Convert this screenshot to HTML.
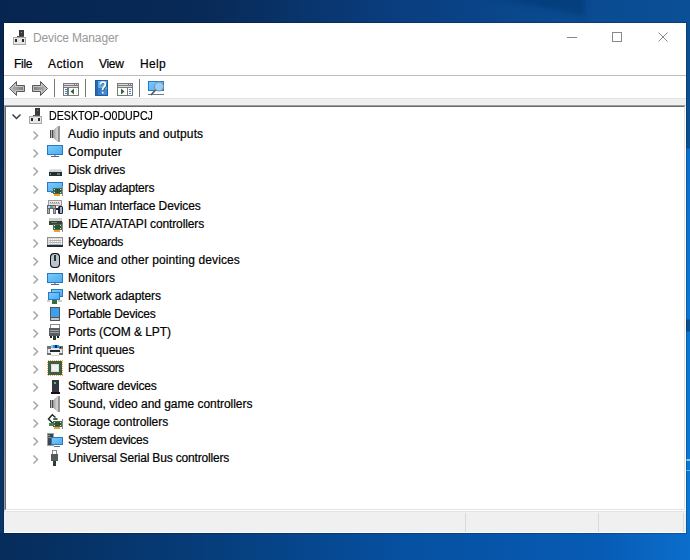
<!DOCTYPE html>
<html><head><meta charset="utf-8">
<style>
html,body{margin:0;padding:0}
body{width:690px;height:560px;overflow:hidden;position:relative;font-family:"Liberation Sans",sans-serif;font-size:12px;color:#000;
background:#07305c;}
.a{position:absolute}
#bgtop{left:0;top:0;width:690px;height:23px;background:linear-gradient(90deg,#062550 0%,#082a58 30%,#0a3e80 58%,#0a4a90 81%,#0b4f96 100%)}
#bgbot{left:0;top:533px;width:690px;height:27px;background:linear-gradient(90deg,#062c5a 0%,#063d7a 30%,#0650a0 58%,#075bb4 87%,#0b6ecc 100%)}
#bgright{left:686px;top:23px;width:4px;height:510px;background:linear-gradient(180deg,#0b4f93 0px,#0b4f93 125px,#0a70d0 126px,#0a76d6 296px,#0a4f90 297px,#0a4f90 308px,#0a76d6 309px,#0a78d8 480px,#0a70d0 510px)}
#bgleft{left:0;top:23px;width:4px;height:510px;background:linear-gradient(180deg,#052550 0%,#07305c 50%,#08366a 100%)}
#win{left:3px;top:22px;width:684px;height:512px;box-sizing:border-box;border:1px solid rgba(0,0,0,.2);background:#fff;background-clip:padding-box}
.t{position:absolute;white-space:nowrap;line-height:14px;-webkit-text-stroke:0.2px #000}
</style></head><body>
<div class="a" id="bgtop"></div>
<svg class="a" style="left:0;top:0" width="690" height="23">
<defs><filter id="bl" x="-20%" y="-100%" width="140%" height="300%"><feGaussianBlur stdDeviation="3"/></filter></defs>
<polygon points="485,-4 585,-4 585,16" fill="#03346e" opacity="0.55" filter="url(#bl)"/>
</svg>
<div class="a" id="bgbot"></div>
<div class="a" id="bgright"></div>
<div class="a" id="bgleft"></div>
<div class="a" style="left:686px;top:459px;width:4px;height:2px;background:#8ec6ea"></div>
<div class="a" style="left:686px;top:470px;width:4px;height:1px;background:#6fb4ea"></div>
<div class="a" id="win"></div>

<!-- title -->
<div class="t" style="left:33px;top:31px;color:#999;-webkit-text-stroke:0;font-size:12px;letter-spacing:-0.15px">Device Manager</div>
<!-- caption buttons -->
<div class="a" style="left:567px;top:37px;width:10px;height:1px;background:#888"></div>
<div class="a" style="left:612px;top:32px;width:10px;height:10px;box-sizing:border-box;border:1px solid #888"></div>
<svg class="a" style="left:658px;top:32px" width="10" height="10"><path d="M0.5 0.5L9.5 9.5M9.5 0.5L0.5 9.5" stroke="#888" stroke-width="1"/></svg>

<!-- menu -->
<div class="t" style="left:14px;top:57px;letter-spacing:-0.3px">File</div>
<div class="t" style="left:48px;top:57px;letter-spacing:0.4px">Action</div>
<div class="t" style="left:99px;top:57px;letter-spacing:-0.33px">View</div>
<div class="t" style="left:140px;top:57px;letter-spacing:0.33px">Help</div>
<div class="a" style="left:4px;top:75px;width:682px;height:1px;background:#bdbdbd"></div>

<!-- toolbar strip -->
<div class="a" style="left:4px;top:98px;width:682px;height:1px;background:#e3e3e3"></div>
<div class="a" style="left:4px;top:99px;width:682px;height:6px;background:#f0f0f0"></div>

<!-- tree view -->
<div class="a" style="left:4px;top:105px;width:682px;height:406px;box-sizing:border-box;border-style:solid;border-width:2px;border-color:#a0a0a0 #fff #fff #a0a0a0;background:#fff"></div>
<div class="a" style="left:5px;top:106px;width:680px;height:404px;box-sizing:border-box;border-style:solid;border-width:1px;border-color:#696969 #e3e3e3 #e3e3e3 #696969"></div>

<!-- status bar -->
<div class="a" style="left:4px;top:511px;width:682px;height:1px;background:#e3e3e3"></div>
<div class="a" style="left:4px;top:512px;width:682px;height:20px;background:#f0f0f0"></div>
<div class="a" style="left:465px;top:513px;width:1px;height:19px;background:#dadada"></div>
<div class="a" style="left:598px;top:513px;width:1px;height:19px;background:#dadada"></div>
<div class="a" style="left:683px;top:513px;width:1px;height:19px;background:#dadada"></div>

<svg class="a" style="left:0;top:0" width="690" height="560" viewBox="0 0 690 560" shape-rendering="crispEdges">
<defs>
<linearGradient id="scr" x1="0" y1="0" x2="1" y2="1"><stop offset="0" stop-color="#7cc8fb"/><stop offset="1" stop-color="#48aef2"/></linearGradient>
<linearGradient id="cone" x1="0" y1="0" x2="1" y2="0"><stop offset="0" stop-color="#9a9a9a"/><stop offset="0.6" stop-color="#d6d6d6"/><stop offset="1" stop-color="#8a8a8a"/></linearGradient>
<linearGradient id="arr" x1="0" y1="0" x2="1" y2="0"><stop offset="0" stop-color="#b8b8b8"/><stop offset="1" stop-color="#7a7a7a"/></linearGradient>
<linearGradient id="arr2" x1="0" y1="0" x2="1" y2="0"><stop offset="0" stop-color="#7a7a7a"/><stop offset="1" stop-color="#b8b8b8"/></linearGradient>
</defs>
<!-- title icon -->
<rect x="19" y="30" width="5" height="7" fill="#353b3b"/>
<rect x="21" y="32" width="1" height="1" fill="#5fb35f"/>
<rect x="17" y="36" width="7" height="1" fill="#555"/>
<rect x="13" y="37" width="13" height="8" fill="#a8a8a8"/>
<rect x="14" y="38" width="11" height="6" fill="#e6e6e6"/>
<rect x="15" y="39" width="2" height="3" fill="#2a2a2a"/>
<rect x="22" y="39" width="2" height="3" fill="#2a2a2a"/>

<!-- toolbar: back arrow -->
<path d="M9.5 88.5 L16.5 81.5 L16.5 85.5 L24.5 85.5 L24.5 91.5 L16.5 91.5 L16.5 95.5 Z" fill="url(#arr)" stroke="#5a5a5a" stroke-width="1" shape-rendering="geometricPrecision"/>
<path d="M47.5 88.5 L40.5 81.5 L40.5 85.5 L32.5 85.5 L32.5 91.5 L40.5 91.5 L40.5 95.5 Z" fill="url(#arr2)" stroke="#5a5a5a" stroke-width="1" shape-rendering="geometricPrecision"/>
<path d="M10.9 88.5 L15.5 83.9 L15.5 86.5 L23.5 86.5 L23.5 90.5 L15.5 90.5 L15.5 93.1 Z" fill="none" stroke="#e2e2e2" stroke-width="0.8" opacity="0.8" shape-rendering="geometricPrecision"/>
<path d="M46.1 88.5 L41.5 83.9 L41.5 86.5 L33.5 86.5 L33.5 90.5 L41.5 90.5 L41.5 93.1 Z" fill="none" stroke="#e2e2e2" stroke-width="0.8" opacity="0.8" shape-rendering="geometricPrecision"/>
<rect x="54" y="79" width="1" height="18" fill="#6f7d72"/>
<!-- console tree icon -->
<rect x="63" y="83" width="16" height="13" fill="#7b7b7b"/>
<rect x="64" y="84" width="10" height="1" fill="#dcdcdc"/><rect x="75" y="84" width="1" height="1" fill="#e8e8e8"/><rect x="77" y="84" width="1" height="1" fill="#e8e8e8"/>
<rect x="64" y="86" width="14" height="1" fill="#dcdcdc"/>
<rect x="64" y="88" width="3" height="7" fill="#fff"/>
<rect x="69" y="88" width="9" height="7" fill="#fff"/>
<rect x="65" y="89" width="2" height="1" fill="#3f7fd0"/><rect x="65" y="91" width="2" height="1" fill="#3f7fd0"/><rect x="65" y="93" width="2" height="1" fill="#3f7fd0"/>
<path d="M70.5 91.5 L74 88.5 L74 94.5 Z" fill="#2f6a34" shape-rendering="geometricPrecision"/>
<rect x="76" y="89" width="1" height="5" fill="#eeeeee"/>
<rect x="85" y="79" width="1" height="18" fill="#6f7d72"/>
<!-- help icon -->
<rect x="95" y="80" width="13" height="16" fill="#1e5c9e"/>
<rect x="96" y="81" width="11" height="14" fill="#55aef0"/>
<rect x="96" y="81" width="2" height="14" fill="#2a68aa"/>
<rect x="98" y="88" width="4" height="7" fill="#3a7cc4"/>
<rect x="102" y="89" width="5" height="6" fill="#3f8ad6"/>
<path d="M100.4 84.6 Q100.7 82.2 103 82.2 Q105.4 82.2 105.4 84.4 Q105.4 86 103.7 87.2 Q102.6 88 102.6 90.2" fill="none" stroke="#3a4a5a" stroke-width="1.7" shape-rendering="geometricPrecision" transform="translate(0.7,0.5)"/>
<path d="M100.4 84.6 Q100.7 82.2 103 82.2 Q105.4 82.2 105.4 84.4 Q105.4 86 103.7 87.2 Q102.6 88 102.6 90.2" fill="none" stroke="#fff" stroke-width="1.7" shape-rendering="geometricPrecision"/>
<rect x="101.8" y="91.8" width="1.7" height="1.7" fill="#fff" shape-rendering="geometricPrecision"/>
<!-- action pane icon -->
<rect x="117" y="83" width="16" height="13" fill="#7b7b7b"/>
<rect x="118" y="84" width="10" height="1" fill="#dcdcdc"/><rect x="129" y="84" width="1" height="1" fill="#e8e8e8"/><rect x="131" y="84" width="1" height="1" fill="#e8e8e8"/>
<rect x="118" y="86" width="14" height="1" fill="#dcdcdc"/>
<rect x="118" y="88" width="9" height="7" fill="#fff"/>
<rect x="128" y="88" width="4" height="7" fill="#fff"/>
<rect x="129" y="89" width="2" height="1" fill="#3f7fd0"/><rect x="129" y="91" width="2" height="1" fill="#3f7fd0"/><rect x="129" y="93" width="2" height="1" fill="#3f7fd0"/>
<path d="M121 88.5 L124.5 91.5 L121 94.5 Z" fill="#2f6a34" shape-rendering="geometricPrecision"/>
<rect x="139" y="79" width="1" height="18" fill="#6f7d72"/>
<!-- scan icon -->
<rect x="148" y="81" width="16" height="10" fill="#2b7cc4"/>
<rect x="149" y="82" width="14" height="8" fill="url(#scr)"/>
<rect x="148" y="94" width="16" height="1" fill="#6a7a90"/>
<circle cx="159" cy="86.5" r="4.5" fill="#8fd0ff" stroke="#8a8a8a" stroke-width="1" shape-rendering="geometricPrecision"/>
<path d="M155.5 90 L151 95" stroke="#555" stroke-width="1.6" shape-rendering="geometricPrecision"/>

<!-- tree chevrons -->
<path d="M12.5 114.5 L16.5 118.5 L20.5 114.5" fill="none" stroke="#3c3c3c" stroke-width="1.5" shape-rendering="geometricPrecision"/>
<path d="M33.5 131.5 L37.5 135.5 L33.5 139.5" fill="none" stroke="#a6a6a6" stroke-width="1.5" shape-rendering="geometricPrecision"/>
<path d="M33.5 149.5 L37.5 153.5 L33.5 157.5" fill="none" stroke="#a6a6a6" stroke-width="1.5" shape-rendering="geometricPrecision"/>
<path d="M33.5 167.5 L37.5 171.5 L33.5 175.5" fill="none" stroke="#a6a6a6" stroke-width="1.5" shape-rendering="geometricPrecision"/>
<path d="M33.5 185.5 L37.5 189.5 L33.5 193.5" fill="none" stroke="#a6a6a6" stroke-width="1.5" shape-rendering="geometricPrecision"/>
<path d="M33.5 203.5 L37.5 207.5 L33.5 211.5" fill="none" stroke="#a6a6a6" stroke-width="1.5" shape-rendering="geometricPrecision"/>
<path d="M33.5 221.5 L37.5 225.5 L33.5 229.5" fill="none" stroke="#a6a6a6" stroke-width="1.5" shape-rendering="geometricPrecision"/>
<path d="M33.5 239.5 L37.5 243.5 L33.5 247.5" fill="none" stroke="#a6a6a6" stroke-width="1.5" shape-rendering="geometricPrecision"/>
<path d="M33.5 257.5 L37.5 261.5 L33.5 265.5" fill="none" stroke="#a6a6a6" stroke-width="1.5" shape-rendering="geometricPrecision"/>
<path d="M33.5 275.5 L37.5 279.5 L33.5 283.5" fill="none" stroke="#a6a6a6" stroke-width="1.5" shape-rendering="geometricPrecision"/>
<path d="M33.5 293.5 L37.5 297.5 L33.5 301.5" fill="none" stroke="#a6a6a6" stroke-width="1.5" shape-rendering="geometricPrecision"/>
<path d="M33.5 311.5 L37.5 315.5 L33.5 319.5" fill="none" stroke="#a6a6a6" stroke-width="1.5" shape-rendering="geometricPrecision"/>
<path d="M33.5 329.5 L37.5 333.5 L33.5 337.5" fill="none" stroke="#a6a6a6" stroke-width="1.5" shape-rendering="geometricPrecision"/>
<path d="M33.5 347.5 L37.5 351.5 L33.5 355.5" fill="none" stroke="#a6a6a6" stroke-width="1.5" shape-rendering="geometricPrecision"/>
<path d="M33.5 365.5 L37.5 369.5 L33.5 373.5" fill="none" stroke="#a6a6a6" stroke-width="1.5" shape-rendering="geometricPrecision"/>
<path d="M33.5 383.5 L37.5 387.5 L33.5 391.5" fill="none" stroke="#a6a6a6" stroke-width="1.5" shape-rendering="geometricPrecision"/>
<path d="M33.5 401.5 L37.5 405.5 L33.5 409.5" fill="none" stroke="#a6a6a6" stroke-width="1.5" shape-rendering="geometricPrecision"/>
<path d="M33.5 419.5 L37.5 423.5 L33.5 427.5" fill="none" stroke="#a6a6a6" stroke-width="1.5" shape-rendering="geometricPrecision"/>
<path d="M33.5 437.5 L37.5 441.5 L33.5 445.5" fill="none" stroke="#a6a6a6" stroke-width="1.5" shape-rendering="geometricPrecision"/>
<path d="M33.5 455.5 L37.5 459.5 L33.5 463.5" fill="none" stroke="#a6a6a6" stroke-width="1.5" shape-rendering="geometricPrecision"/>
<rect x="35" y="108" width="5" height="8" fill="#353b3b"/><rect x="37" y="110" width="1" height="1" fill="#5fb35f"/><rect x="33" y="115" width="7" height="1" fill="#555"/><rect x="29" y="116" width="13" height="8" fill="#a8a8a8"/><rect x="30" y="117" width="11" height="6" fill="#e6e6e6"/><rect x="31" y="118" width="2" height="3" fill="#2a2a2a"/><rect x="38" y="118" width="2" height="3" fill="#2a2a2a"/>
<rect x="50" y="130" width="3" height="8" fill="#4a4a4a"/><rect x="51" y="130" width="1" height="8" fill="#b4b4b4"/><path d="M53 130 L58 126 L60 126 L60 142 L58 142 L53 138 Z" fill="url(#cone)"/><rect x="58" y="127" width="1" height="15" fill="#8a948a"/>
<rect x="50" y="400" width="3" height="8" fill="#4a4a4a"/><rect x="51" y="400" width="1" height="8" fill="#b4b4b4"/><path d="M53 400 L58 396 L60 396 L60 412 L58 412 L53 408 Z" fill="url(#cone)"/><rect x="58" y="397" width="1" height="15" fill="#8a948a"/>
<rect x="47" y="145" width="16" height="10" fill="#2a78c0"/><rect x="48" y="146" width="14" height="8" fill="url(#scr)"/><rect x="54" y="155" width="2" height="1" fill="#9aa6b4"/><rect x="51" y="156" width="8" height="1" fill="#5d6b80"/>
<rect x="50" y="169" width="11" height="1" fill="#e4e4e4"/><rect x="49" y="170" width="13" height="2" fill="#d4d4d4"/><rect x="49" y="172" width="13" height="4" fill="#232d36"/><rect x="50" y="173" width="1" height="2" fill="#5d9a5d"/><rect x="57" y="173" width="3" height="2" fill="#4f7f5f"/>
<rect x="47" y="182" width="16" height="10" fill="#2a78c0"/><rect x="48" y="183" width="14" height="8" fill="url(#scr)"/><rect x="51" y="192" width="3" height="1" fill="#5d6b80"/><rect x="53" y="188" width="10" height="6" fill="#3f6e47"/><rect x="55" y="189" width="6" height="4" fill="#2f4f36"/><rect x="54" y="189" width="1" height="1" fill="#cfe3cf"/><rect x="60" y="189" width="1" height="1" fill="#cfe3cf"/><rect x="54" y="192" width="1" height="1" fill="#cfe3cf"/><rect x="60" y="192" width="1" height="1" fill="#cfe3cf"/><rect x="54" y="194" width="6" height="2" fill="#f0a030"/><rect x="62" y="186" width="1" height="10" fill="#8a8a8a"/>
<rect x="48" y="200" width="14" height="6" fill="#9a9a9a"/><rect x="49" y="201" width="12" height="4" fill="#e8e8e8"/><rect x="50" y="202" width="1" height="1" fill="#8a8a8a"/><rect x="52" y="202" width="1" height="1" fill="#8a8a8a"/><rect x="54" y="202" width="1" height="1" fill="#8a8a8a"/><rect x="56" y="202" width="1" height="1" fill="#8a8a8a"/><rect x="58" y="202" width="1" height="1" fill="#8a8a8a"/><rect x="50" y="203" width="10" height="1" fill="#b8b8b8"/><rect x="47" y="205" width="9" height="4" fill="#5e6166"/><rect x="50" y="206" width="3" height="2" fill="#2f9ef0"/><rect x="53" y="206" width="2" height="2" fill="#f5a732"/><rect x="48" y="206" width="2" height="2" fill="#c8c8c8"/><rect x="47" y="209" width="3" height="5" fill="#6a6d70"/><rect x="53" y="209" width="3" height="5" fill="#6a6d70"/><rect x="48" y="209" width="1" height="4" fill="#b0b0b0"/><rect x="54" y="209" width="1" height="4" fill="#b0b0b0"/><rect x="56" y="208" width="2" height="2" fill="#2a2a2a"/><rect x="58" y="206" width="5" height="8" rx="1.5" fill="#14203c" shape-rendering="geometricPrecision"/><rect x="59.5" y="207" width="2" height="6" fill="#a8b4c4"/>
<rect x="49" y="218" width="13" height="3" fill="#cfcfcf"/><rect x="49" y="221" width="13" height="4" fill="#344238"/><rect x="51" y="222" width="6" height="1" fill="#5d8a5d"/><rect x="53" y="224" width="10" height="6" fill="#3f6e47"/><rect x="55" y="225" width="6" height="4" fill="#2f4f36"/><rect x="54" y="225" width="1" height="1" fill="#cfe3cf"/><rect x="60" y="225" width="1" height="1" fill="#cfe3cf"/><rect x="54" y="228" width="1" height="1" fill="#cfe3cf"/><rect x="60" y="228" width="1" height="1" fill="#cfe3cf"/><rect x="54" y="230" width="6" height="2" fill="#f0a030"/><rect x="62" y="222" width="1" height="10" fill="#8a8a8a"/>
<rect x="47" y="237" width="16" height="10" fill="#8f8f8f"/><rect x="48" y="238" width="14" height="7" fill="#dcdcdc"/><rect x="49" y="239" width="1" height="1" fill="#f8f8f8"/><rect x="51" y="239" width="1" height="1" fill="#f8f8f8"/><rect x="53" y="239" width="1" height="1" fill="#f8f8f8"/><rect x="55" y="239" width="1" height="1" fill="#f8f8f8"/><rect x="57" y="239" width="1" height="1" fill="#f8f8f8"/><rect x="59" y="239" width="1" height="1" fill="#f8f8f8"/><rect x="61" y="239" width="1" height="1" fill="#f8f8f8"/><rect x="49" y="240" width="12" height="1" fill="#b0b0b0"/><rect x="49" y="241" width="1" height="1" fill="#f8f8f8"/><rect x="51" y="241" width="1" height="1" fill="#f8f8f8"/><rect x="53" y="241" width="1" height="1" fill="#f8f8f8"/><rect x="55" y="241" width="1" height="1" fill="#f8f8f8"/><rect x="57" y="241" width="1" height="1" fill="#f8f8f8"/><rect x="59" y="241" width="1" height="1" fill="#f8f8f8"/><rect x="61" y="241" width="1" height="1" fill="#f8f8f8"/><rect x="49" y="242" width="12" height="1" fill="#b0b0b0"/><rect x="49" y="243" width="1" height="1" fill="#f8f8f8"/><rect x="51" y="243" width="1" height="1" fill="#f8f8f8"/><rect x="53" y="243" width="1" height="1" fill="#f8f8f8"/><rect x="55" y="243" width="1" height="1" fill="#f8f8f8"/><rect x="57" y="243" width="1" height="1" fill="#f8f8f8"/><rect x="59" y="243" width="1" height="1" fill="#f8f8f8"/><rect x="61" y="243" width="1" height="1" fill="#f8f8f8"/><rect x="49" y="244" width="12" height="1" fill="#b0b0b0"/><rect x="47" y="245" width="16" height="2" fill="#1e2d3a"/>
<rect x="50" y="253" width="10" height="15" rx="4" fill="#111" shape-rendering="geometricPrecision"/><rect x="51" y="254" width="8" height="13" rx="3.5" fill="#b8c4d2" shape-rendering="geometricPrecision"/><rect x="54" y="255" width="2" height="6" fill="#2c3c2c"/>
<rect x="47" y="273" width="16" height="10" fill="#2a78c0"/><rect x="48" y="274" width="14" height="8" fill="url(#scr)"/><rect x="54" y="283" width="2" height="1" fill="#9aa6b4"/><rect x="51" y="284" width="8" height="1" fill="#5d6b80"/>
<rect x="51" y="289" width="12" height="8" fill="#2a78c0"/><rect x="52" y="290" width="10" height="6" fill="url(#scr)"/><rect x="48" y="292" width="12" height="8" fill="#2a78c0"/><rect x="49" y="293" width="10" height="6" fill="url(#scr)"/><rect x="47" y="300" width="3" height="2" fill="#cfcfcf"/><rect x="58" y="300" width="4" height="2" fill="#cfcfcf"/><rect x="52" y="300" width="5" height="4" fill="#3c6a44"/>
<rect x="50" y="307" width="10" height="14" fill="#555"/><rect x="51" y="308" width="8" height="9" fill="#3aa0f0"/><rect x="51" y="318" width="8" height="2" fill="#c8c8c8"/>
<rect x="50" y="324" width="10" height="4" fill="#8a8a8a"/><rect x="51" y="325" width="8" height="3" fill="#fff"/><rect x="49" y="328" width="11" height="8" fill="#5a5d60"/><rect x="50" y="330" width="9" height="1" fill="#a0a4a8"/><rect x="50" y="332" width="9" height="1" fill="#a0a4a8"/><rect x="50" y="336" width="2" height="2" fill="#222"/><rect x="57" y="336" width="2" height="2" fill="#222"/><rect x="53" y="336" width="3" height="4" fill="#2c4030"/>
<rect x="47" y="346" width="16" height="9" fill="#9a9a9a"/><rect x="48" y="347" width="14" height="7" fill="#e6e6e6"/><rect x="47" y="346" width="4" height="3" fill="#6e726e"/><rect x="59" y="346" width="4" height="3" fill="#6e726e"/><rect x="60" y="347" width="1" height="1" fill="#000"/><rect x="47" y="353" width="4" height="2" fill="#6e726e"/><rect x="59" y="353" width="4" height="2" fill="#6e726e"/><rect x="51" y="345" width="8" height="3" fill="#2a8ee6"/><rect x="51" y="345" width="2" height="3" fill="#7cc8f8"/><rect x="55" y="345" width="2" height="3" fill="#06264a"/><rect x="50" y="350" width="10" height="2" fill="#1e2a34"/><rect x="51" y="352" width="8" height="4" fill="#fbfbfb"/><rect x="51" y="355" width="8" height="1" fill="#d0d4d4"/>
<rect x="47.5" y="360.5" width="15" height="15" fill="none" stroke="#f5b040" stroke-width="1" stroke-dasharray="1 1"/><rect x="48" y="361" width="14" height="14" fill="#3f5e45"/><rect x="51" y="364" width="8" height="8" fill="#dcdcdc"/><rect x="52" y="365" width="6" height="6" fill="#f2f2f2"/>
<rect x="52" y="380" width="7" height="12" fill="#2f3a42"/><rect x="54" y="382" width="2" height="2" fill="#6fb06f"/><rect x="51" y="392" width="9" height="2" fill="#2a0a10"/>
<path d="M55.5 417.5 L52.3 414.8 L48.5 419 L52.5 423 L54 424.5 M53.2 419 L57.5 419" fill="none" stroke="#1f2f24" stroke-width="1.5" shape-rendering="geometricPrecision"/><rect x="49" y="423" width="4" height="3" fill="#4f7f55"/><rect x="53" y="421" width="10" height="6" fill="#3f6e47"/><rect x="55" y="422" width="6" height="4" fill="#2f4f36"/><rect x="54" y="422" width="1" height="1" fill="#cfe3cf"/><rect x="60" y="422" width="1" height="1" fill="#cfe3cf"/><rect x="54" y="425" width="1" height="1" fill="#cfe3cf"/><rect x="60" y="425" width="1" height="1" fill="#cfe3cf"/><rect x="54" y="427" width="6" height="2" fill="#f0a030"/><rect x="62" y="419" width="1" height="10" fill="#8a8a8a"/>
<rect x="47" y="433" width="7" height="13" fill="#9aa0a6"/><rect x="48" y="434" width="5" height="11" fill="#3e454c"/><rect x="48" y="437" width="5" height="1" fill="#8a9096"/><rect x="48" y="435" width="2" height="1" fill="#6fb06f"/><rect x="51" y="437" width="12" height="8" fill="#2a78c0"/><rect x="52" y="438" width="10" height="6" fill="url(#scr)"/><rect x="54" y="446" width="6" height="1" fill="#5d6b80"/>
<rect x="52" y="450" width="5" height="4" fill="#8a8a8a"/><rect x="53" y="451" width="3" height="3" fill="#fff"/><rect x="51" y="454" width="7" height="7" fill="#555a5e"/><rect x="53" y="461" width="3" height="5" fill="#2c3a30"/>
</svg>
<div id="tree">
<div class="t" style="left:49px;top:109px;transform:scaleX(0.887);transform-origin:0 0">DESKTOP-O0DUPCJ</div>
<div class="t" style="left:68px;top:127px;letter-spacing:0.13px">Audio inputs and outputs</div>
<div class="t" style="left:68px;top:145px;letter-spacing:0.143px">Computer</div>
<div class="t" style="left:68px;top:163px;letter-spacing:-0.15px">Disk drives</div>
<div class="t" style="left:68px;top:181px;letter-spacing:-0.2px">Display adapters</div>
<div class="t" style="left:68px;top:199px;letter-spacing:-0.091px">Human Interface Devices</div>
<div class="t" style="left:68px;top:217px;letter-spacing:-0.125px">IDE ATA/ATAPI controllers</div>
<div class="t" style="left:68px;top:235px;letter-spacing:-0.25px">Keyboards</div>
<div class="t" style="left:68px;top:253px;letter-spacing:0.1px">Mice and other pointing devices</div>
<div class="t" style="left:68px;top:271px;letter-spacing:0.143px">Monitors</div>
<div class="t" style="left:68px;top:289px;letter-spacing:-0.067px">Network adapters</div>
<div class="t" style="left:68px;top:307px;letter-spacing:-0.2px">Portable Devices</div>
<div class="t" style="left:68px;top:325px;letter-spacing:-0.062px">Ports (COM &amp; LPT)</div>
<div class="t" style="left:68px;top:343px;letter-spacing:-0.091px">Print queues</div>
<div class="t" style="left:68px;top:361px;letter-spacing:-0.411px">Processors</div>
<div class="t" style="left:68px;top:379px;letter-spacing:-0.167px">Software devices</div>
<div class="t" style="left:68px;top:397px;letter-spacing:-0.031px">Sound, video and game controllers</div>
<div class="t" style="left:68px;top:415px;letter-spacing:-0.028px">Storage controllers</div>
<div class="t" style="left:68px;top:433px;letter-spacing:-0.277px">System devices</div>
<div class="t" style="left:68px;top:451px;letter-spacing:-0.177px">Universal Serial Bus controllers</div>
</div>
</body></html>
